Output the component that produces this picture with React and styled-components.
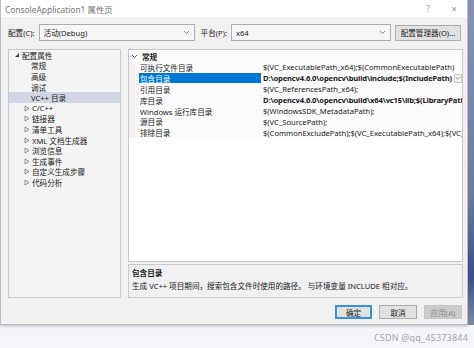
import React from 'react';
import styled, { createGlobalStyle } from 'styled-components';

const GlobalStyle = createGlobalStyle`
  html, body {
    margin: 0;
    padding: 0;
    background: #f5f6fa;
    overflow: hidden;
  }
  * {
    box-sizing: border-box;
  }
`;

const FONT = `"Noto Sans", "Noto Sans CJK SC", sans-serif`;

const Screen = styled.div`
  width: 474px;
  height: 348px;
  display: flex;
  flex-direction: column;
  font-family: ${FONT};
  font-size: 7.6px;
  color: #1a1a1a;
`;

const Top = styled.div`
  display: flex;
  height: 325px;
`;

const Strip = styled.div`
  width: 6px;
  background: linear-gradient(180deg, #8792b3 0%, #6c7aa0 60%, #3c4f86 85%, #7d88a8 100%);
`;

const Dialog = styled.div`
  flex: 1;
  display: flex;
  flex-direction: column;
  background: #f0f0f0;
  border: 1px solid #b8bcc8;
  border-top: none;
  box-shadow: 0 1px 3px rgba(0, 0, 0, 0.25);
`;

const TitleBar = styled.div`
  height: 17px;
  background: #ffffff;
  display: flex;
  align-items: center;
  padding: 0 0 0 4px;
  color: #777;
  font-size: 8.4px;
`;

const TitleText = styled.span`
  flex: 1;
`;

const TitleBtn = styled.span`
  width: 26px;
  text-align: center;
  color: #9a9a9a;
  font-size: ${(p) => p.size || 8}px;
`;

const ConfigRow = styled.div`
  height: 31px;
  display: flex;
  align-items: center;
  padding: 0 6px 0 7px;
  gap: 4px;
`;

const Label = styled.span`
  white-space: nowrap;
  margin-left: ${(p) => p.gap || 0}px;
`;

const Select = styled.div`
  width: ${(p) => p.w}px;
  height: 17px;
  border: 1px solid #adadad;
  background: #f6f6f6;
  display: flex;
  align-items: center;
  padding: 0 4px;
  justify-content: space-between;
`;

const Button = styled.div`
  height: ${(p) => p.h || 14}px;
  width: ${(p) => p.w}px;
  display: flex;
  align-items: center;
  justify-content: center;
  border: 1px solid ${(p) => (p.primary ? '#3c8fd8' : p.disabled ? '#c6c6c6' : '#adadad')};
  background: ${(p) => (p.disabled ? '#cccccc' : '#e1e1e1')};
  color: ${(p) => (p.disabled ? '#8a8a8a' : '#1a1a1a')};
  box-shadow: ${(p) => (p.primary ? 'inset 0 0 0 1px #3c8fd8' : 'none')};
  white-space: nowrap;
`;

const Main = styled.div`
  display: flex;
  gap: 7px;
  padding: 1px 4px 0 7px;
  height: 250px;
`;

const Tree = styled.div`
  width: 113px;
  background: #f4f4f4;
  border: 1px solid #c9c9c9;
`;

const TreeItem = styled.div`
  height: 10.6px;
  display: flex;
  align-items: center;
  padding-left: ${(p) => p.indent}px;
  background: ${(p) => (p.selected ? '#d2d6e4' : 'transparent')};
  white-space: nowrap;
`;

const TreeArrow = styled.span`
  width: 8px;
  display: inline-flex;
  align-items: center;
  color: #666;
`;

const RightPane = styled.div`
  flex: 1;
  display: flex;
  flex-direction: column;
  gap: 2px;
`;

const Grid = styled.div`
  height: 213px;
  background: #ffffff;
  border: 1px solid #c9c9c9;
  overflow: hidden;
  padding-top: 1px;
`;

const GridBody = styled.div`
  background: linear-gradient(90deg, #f4f4f4 0 10px, #fbfbfb 10px);
`;

const SectionRow = styled.div`
  height: 11px;
  display: flex;
  align-items: center;
  padding-left: 2px;
  gap: 4px;
  font-weight: bold;
  background: #fbfbfb;
`;

const PropRow = styled.div`
  height: 10.9px;
  display: grid;
  grid-template-columns: 122px 1fr;
  margin-left: 10px;
  align-items: center;
`;

const PropName = styled.div`
  height: 10px;
  display: flex;
  align-items: center;
  padding-left: 1px;
  white-space: nowrap;
  background: ${(p) => (p.selected ? '#0078d7' : 'transparent')};
  color: ${(p) => (p.selected ? '#ffffff' : 'inherit')};
`;

const PropValue = styled.div`
  display: flex;
  align-items: center;
  padding-left: 2px;
  overflow: hidden;
  white-space: nowrap;
  font-weight: ${(p) => (p.bold ? 'bold' : 'normal')};
  letter-spacing: ${(p) => (p.bold ? '-0.15px' : '0')};
`;

const ValueText = styled.span`
  flex: 1;
  overflow: hidden;
`;

const DropBtn = styled.span`
  width: 8px;
  height: 9px;
  flex: none;
  border: 1px solid #c8c8c8;
  background: #f2f2f2;
  display: inline-flex;
  align-items: center;
  justify-content: center;
`;

const Desc = styled.div`
  flex: 1;
  background: #f0f0f0;
  border: 1px solid #c9c9c9;
  padding: 2px 3px;
  display: flex;
  flex-direction: column;
  gap: 2px;
`;

const DescTitle = styled.div`
  font-weight: bold;
`;

const Footer = styled.div`
  flex: 1;
  display: flex;
  justify-content: flex-end;
  align-items: flex-start;
  padding: 7px 5px 0 0;
  gap: 7px;
`;

const Bottom = styled.div`
  flex: 1;
  display: flex;
  justify-content: flex-end;
  align-items: center;
  padding: 2px 6px 0 0;
  color: #a4a6ad;
  font-size: 9px;
  letter-spacing: 0.2px;
`;

const Chevron = ({ color = '#888' }) => (
  <svg width="7" height="5" viewBox="0 0 7 5">
    <path d="M1 1 L3.5 3.5 L6 1" fill="none" stroke={color} strokeWidth="1" />
  </svg>
);

const Expanded = () => (
  <svg width="6" height="6" viewBox="0 0 6 6">
    <path d="M5 1 L5 5 L1 5 Z" fill="#444" />
  </svg>
);

const Collapsed = () => (
  <svg width="6" height="7" viewBox="0 0 6 7">
    <path d="M1 1 L5 3.5 L1 6 Z" fill="none" stroke="#777" strokeWidth="0.8" />
  </svg>
);

const treeChildren = ['常规', '高级', '调试', 'VC++ 目录'];
const treeGroups = ['C/C++', '链接器', '清单工具', 'XML 文档生成器', '浏览信息', '生成事件', '自定义生成步骤', '代码分析'];

const props = [
  { name: '可执行文件目录', value: '$(VC_ExecutablePath_x64);$(CommonExecutablePath)' },
  { name: '包含目录', value: 'D:\\opencv4.6.0\\opencv\\build\\include;$(IncludePath)', bold: true, selected: true },
  { name: '引用目录', value: '$(VC_ReferencesPath_x64);' },
  { name: '库目录', value: 'D:\\opencv4.6.0\\opencv\\build\\x64\\vc15\\lib;$(LibraryPath)', bold: true },
  { name: 'Windows 运行库目录', value: '$(WindowsSDK_MetadataPath);' },
  { name: '源目录', value: '$(VC_SourcePath);' },
  { name: '排除目录', value: '$(CommonExcludePath);$(VC_ExecutablePath_x64);$(VC_LibraryPath_x64)' },
];

const App = () => {
  return (
    <Screen>
      <GlobalStyle />
      <Top>
        <Dialog>
          <TitleBar>
            <TitleText>ConsoleApplication1 属性页</TitleText>
            <TitleBtn>?</TitleBtn>
            <TitleBtn size={10}>×</TitleBtn>
          </TitleBar>
          <ConfigRow>
            <Label>配置(C):</Label>
            <Select w={156}>
              <span>活动(Debug)</span>
              <Chevron />
            </Select>
            <Label gap={2}>平台(P):</Label>
            <Select w={160}>
              <span>x64</span>
              <Chevron />
            </Select>
            <Button w={66} h={16}>配置管理器(O)...</Button>
          </ConfigRow>
          <Main>
            <Tree>
              <TreeItem indent={5}>
                <TreeArrow><Expanded /></TreeArrow>
                配置属性
              </TreeItem>
              {treeChildren.map((t) => (
                <TreeItem key={t} indent={22} selected={t === 'VC++ 目录'}>
                  {t}
                </TreeItem>
              ))}
              {treeGroups.map((t) => (
                <TreeItem key={t} indent={15}>
                  <TreeArrow><Collapsed /></TreeArrow>
                  {t}
                </TreeItem>
              ))}
            </Tree>
            <RightPane>
              <Grid>
                <SectionRow>
                  <Chevron color="#555" />
                  常规
                </SectionRow>
                <GridBody>
                  {props.map((p) => (
                    <PropRow key={p.name}>
                      <PropName selected={p.selected}>{p.name}</PropName>
                      <PropValue bold={p.bold}>
                        <ValueText>{p.value}</ValueText>
                        {p.selected && (
                          <DropBtn>
                            <Chevron />
                          </DropBtn>
                        )}
                      </PropValue>
                    </PropRow>
                  ))}
                </GridBody>
              </Grid>
              <Desc>
                <DescTitle>包含目录</DescTitle>
                <div>生成 VC++ 项目期间，搜索包含文件时使用的路径。 与环境变量 INCLUDE 相对应。</div>
              </Desc>
            </RightPane>
          </Main>
          <Footer>
            <Button w={37} primary>确定</Button>
            <Button w={38}>取消</Button>
            <Button w={38} disabled>应用(A)</Button>
          </Footer>
        </Dialog>
        <Strip />
      </Top>
      <Bottom>CSDN @qq_45373844</Bottom>
    </Screen>
  );
};

export default App;
